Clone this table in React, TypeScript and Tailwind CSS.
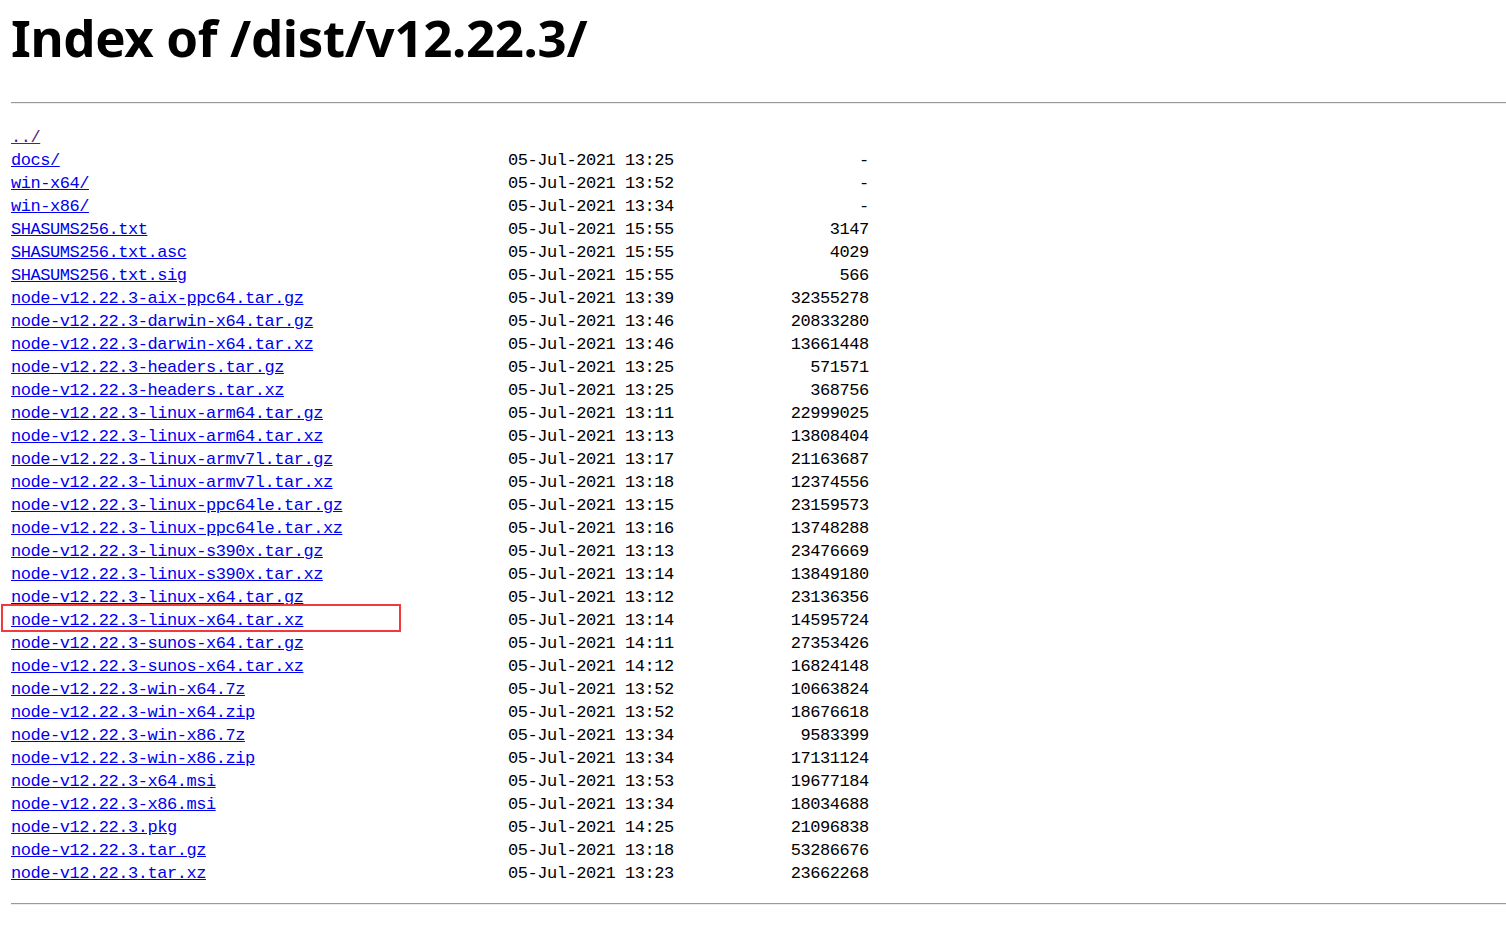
const rows: [string, string, string][] = [
  ['docs/', '05-Jul-2021 13:25', '-'],
  ['win-x64/', '05-Jul-2021 13:52', '-'],
  ['win-x86/', '05-Jul-2021 13:34', '-'],
  ['SHASUMS256.txt', '05-Jul-2021 15:55', '3147'],
  ['SHASUMS256.txt.asc', '05-Jul-2021 15:55', '4029'],
  ['SHASUMS256.txt.sig', '05-Jul-2021 15:55', '566'],
  ['node-v12.22.3-aix-ppc64.tar.gz', '05-Jul-2021 13:39', '32355278'],
  ['node-v12.22.3-darwin-x64.tar.gz', '05-Jul-2021 13:46', '20833280'],
  ['node-v12.22.3-darwin-x64.tar.xz', '05-Jul-2021 13:46', '13661448'],
  ['node-v12.22.3-headers.tar.gz', '05-Jul-2021 13:25', '571571'],
  ['node-v12.22.3-headers.tar.xz', '05-Jul-2021 13:25', '368756'],
  ['node-v12.22.3-linux-arm64.tar.gz', '05-Jul-2021 13:11', '22999025'],
  ['node-v12.22.3-linux-arm64.tar.xz', '05-Jul-2021 13:13', '13808404'],
  ['node-v12.22.3-linux-armv7l.tar.gz', '05-Jul-2021 13:17', '21163687'],
  ['node-v12.22.3-linux-armv7l.tar.xz', '05-Jul-2021 13:18', '12374556'],
  ['node-v12.22.3-linux-ppc64le.tar.gz', '05-Jul-2021 13:15', '23159573'],
  ['node-v12.22.3-linux-ppc64le.tar.xz', '05-Jul-2021 13:16', '13748288'],
  ['node-v12.22.3-linux-s390x.tar.gz', '05-Jul-2021 13:13', '23476669'],
  ['node-v12.22.3-linux-s390x.tar.xz', '05-Jul-2021 13:14', '13849180'],
  ['node-v12.22.3-linux-x64.tar.gz', '05-Jul-2021 13:12', '23136356'],
  ['node-v12.22.3-linux-x64.tar.xz', '05-Jul-2021 13:14', '14595724'],
  ['node-v12.22.3-sunos-x64.tar.gz', '05-Jul-2021 14:11', '27353426'],
  ['node-v12.22.3-sunos-x64.tar.xz', '05-Jul-2021 14:12', '16824148'],
  ['node-v12.22.3-win-x64.7z', '05-Jul-2021 13:52', '10663824'],
  ['node-v12.22.3-win-x64.zip', '05-Jul-2021 13:52', '18676618'],
  ['node-v12.22.3-win-x86.7z', '05-Jul-2021 13:34', '9583399'],
  ['node-v12.22.3-win-x86.zip', '05-Jul-2021 13:34', '17131124'],
  ['node-v12.22.3-x64.msi', '05-Jul-2021 13:53', '19677184'],
  ['node-v12.22.3-x86.msi', '05-Jul-2021 13:34', '18034688'],
  ['node-v12.22.3.pkg', '05-Jul-2021 14:25', '21096838'],
  ['node-v12.22.3.tar.gz', '05-Jul-2021 13:18', '53286676'],
  ['node-v12.22.3.tar.xz', '05-Jul-2021 13:23', '23662268'],
]

const Rule = () => (
  <div className="ml-[11px]">
    <div className="h-[1px] bg-[#9a9a9a]" />
    <div className="h-[1px] bg-[#ececec]" />
  </div>
)

export default function App() {
  return (
    <div className="bg-white min-h-[939px] text-black">
      <h1 className="mt-[11px] ml-[11px] text-[51px] leading-[52px] tracking-[-0.35px] font-bold font-['Noto_Sans',sans-serif]">
        Index of /dist/v12.22.3/
      </h1>
      <div className="mt-[39px]">
        <Rule />
      </div>
      <div className="mt-[22px] mb-[18px] ml-[11px] whitespace-pre font-['Liberation_Mono',monospace] text-[17px] leading-[23px] tracking-[-0.455px]">
        <div>
          <a href="#" className="text-[#551a8b] underline">../</a>
        </div>
        {rows.map(([name, date, size]) => (
          <div key={name} className="relative">
            <a href="#" className="text-[#0000ee] underline">{name}</a>
            {' '.repeat(51 - name.length) + date + size.padStart(20, ' ')}
            {name === 'node-v12.22.3-linux-x64.tar.xz' && (
              <div className="absolute left-[-10px] top-[-5px] w-[400px] h-[28px] border-2 border-[#f23a3a]" />
            )}
          </div>
        ))}
      </div>
      <Rule />
    </div>
  )
}
